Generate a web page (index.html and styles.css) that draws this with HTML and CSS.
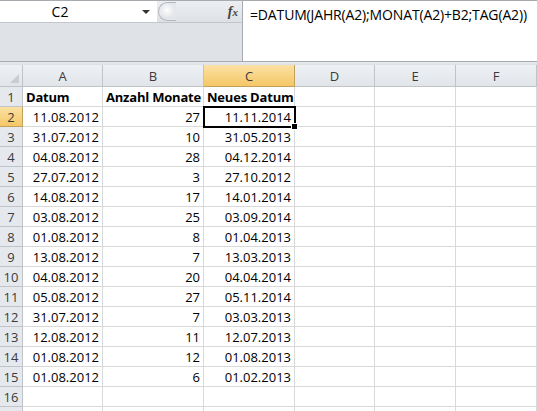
FILE: index.html
```html
<!DOCTYPE html>
<html lang="de">
  <head>
    <meta charset="utf-8" />
    <title>Neues Datum</title>
    <link rel="stylesheet" href="styles.css">
  </head>
  <body>
    <div class="formula-bar">
      <div class="formula-bar-left">
        <div class="formula-bar-top">
          <div class="name-box">
            <span class="name-box-value">C2</span>
            <span class="name-box-arrow"></span>
          </div>
          <div class="fx-pill">
            <span class="fx-grip"></span>
            <span class="fx-label">f<small>x</small></span>
          </div>
        </div>
      </div>
      <div class="formula-input">=DATUM(JAHR(A2);MONAT(A2)+B2;TAG(A2))</div>
    </div>
    <div class="formula-gap"></div>

    <div id="sheet" class="sheet">
      <div class="hdr corner"><span class="corner-tri"></span></div>
      <div class="hdr col">A</div>
      <div class="hdr col">B</div>
      <div class="hdr col active">C</div>
      <div class="hdr col">D</div>
      <div class="hdr col">E</div>
      <div class="hdr col">F</div>
    </div>

    <script src="sheet.js"></script>
  </body>
</html>
```

FILE: sheet.js
```js
var rows = [
    ["11.08.2012", "27", "11.11.2014"],
    ["31.07.2012", "10", "31.05.2013"],
    ["04.08.2012", "28", "04.12.2014"],
    ["27.07.2012", "3", "27.10.2012"],
    ["14.08.2012", "17", "14.01.2014"],
    ["03.08.2012", "25", "03.09.2014"],
    ["01.08.2012", "8", "01.04.2013"],
    ["13.08.2012", "7", "13.03.2013"],
    ["04.08.2012", "20", "04.04.2014"],
    ["05.08.2012", "27", "05.11.2014"],
    ["31.07.2012", "7", "03.03.2013"],
    ["12.08.2012", "11", "12.07.2013"],
    ["01.08.2012", "12", "01.08.2013"],
    ["01.08.2012", "6", "01.02.2013"]
];

var sheet = document.getElementById("sheet");

function cell(text, cls) {
    var el = document.createElement("div");
    el.className = cls;
    el.textContent = text;
    sheet.appendChild(el);
    return el;
}

function emptyRow(label) {
    cell(label, "hdr row");
    for (var i = 0; i < 6; i++) cell("", "cell");
}

// header row 1
cell("1", "hdr row");
cell("Datum", "cell bold");
cell("Anzahl Monate", "cell bold");
cell("Neues Datum", "cell bold");
cell("", "cell");
cell("", "cell");
cell("", "cell");

rows.forEach(function (r, i) {
    var n = i + 2;
    cell(String(n), n === 2 ? "hdr row active" : "hdr row");
    cell(r[0], "cell num");
    cell(r[1], "cell num");
    var c = cell(r[2], n === 2 ? "cell num selected" : "cell num");
    if (n === 2) {
        var handle = document.createElement("span");
        handle.className = "fill-handle";
        c.appendChild(handle);
    }
    cell("", "cell");
    cell("", "cell");
    cell("", "cell");
});

emptyRow("16");
// row 17 is only a sliver at the bottom edge
emptyRow("");
```

FILE: styles.css
```css
:root {
    --chrome-bg: #dfe3e8;
    --chrome-line: #a7abb0;
    --grid-line: #d9d9d9;
    --hdr-bg: #e5e9ee;
    --hdr-line: #c0c4c8;
    --hdr-text: #3b3b3b;
    --active-top: #fbe1a4;
    --active-bottom: #f5c766;
}

html, body {
    margin: 0;
    padding: 0;
    width: 537px;
    height: 411px;
    overflow: hidden;
    background: #fff;
    font-family: "Open Sans", "Liberation Sans", Arial, sans-serif;
    color: #000;
}

/* formula bar */
.formula-bar {
    display: flex;
    height: 62px;
    border-top: 1px solid var(--chrome-line);
    border-bottom: 1px solid var(--chrome-line);
    box-sizing: border-box;
    background: var(--chrome-bg);
}
.formula-bar-left {
    width: 242px;
    border-right: 1px solid var(--chrome-line);
}
.formula-bar-top {
    display: flex;
    height: 21px;
    border-bottom: 1px solid #c3c7cc;
}
.name-box {
    width: 157px;
    background: #fff;
    display: flex;
    align-items: center;
}
.name-box-value {
    flex: 1;
    text-align: center;
    font-size: 14px;
    padding-right: 22px;
}
.name-box-arrow {
    width: 0;
    height: 0;
    border-left: 4px solid transparent;
    border-right: 4px solid transparent;
    border-top: 4px solid #333;
    margin-right: 7px;
}
.fx-pill {
    flex: 1;
    display: flex;
    align-items: center;
    justify-content: space-between;
    background: linear-gradient(#eceef1, #dde1e6);
}
.fx-grip {
    width: 18px;
    height: 19px;
    margin-left: 1px;
    border: 1px solid #b5b9be;
    border-right: none;
    border-radius: 11px 0 0 11px;
    background: radial-gradient(circle at 8px 7px, #ffffff 0, #f3f4f6 3px, #e3e6ea 8px);
    box-sizing: border-box;
}
.fx-label {
    font-family: "Liberation Serif", "DejaVu Serif", serif;
    font-style: italic;
    font-weight: bold;
    font-size: 14px;
    color: #444;
    margin-right: 4px;
}
.fx-label small {
    font-size: 11px;
}
.formula-input {
    flex: 1;
    background: #fff;
    font-size: 14px;
    padding: 4px 0 0 7px;
    letter-spacing: -0.15px;
}
.formula-gap {
    height: 3px;
    background: linear-gradient(#e9ecef, #dcdfe3);
}

/* sheet grid */
.sheet {
    display: grid;
    grid-template-columns: 23px 80px 101px 91px 80px 81px 81px;
    grid-template-rows: 22px;
    grid-auto-rows: 20px;
    font-size: 13px;
}
.hdr, .cell {
    border-right: 1px solid var(--grid-line);
    border-bottom: 1px solid var(--grid-line);
    box-sizing: border-box;
    white-space: nowrap;
}
.hdr {
    background: var(--hdr-bg);
    color: var(--hdr-text);
    border-color: var(--hdr-line);
    display: flex;
    align-items: center;
    justify-content: center;
}
.hdr.col {
    background: linear-gradient(#eef1f4, #e1e5ea);
}
.hdr.row {
    padding-top: 1px;
}
.hdr.active {
    background: linear-gradient(var(--active-top), var(--active-bottom));
    border-color: #c2a15a;
}
.hdr.corner {
    position: relative;
    background: linear-gradient(#eef1f4, #e1e5ea);
}
.corner-tri {
    position: absolute;
    right: 3px;
    bottom: 3px;
    width: 0;
    height: 0;
    border-left: 9px solid transparent;
    border-bottom: 9px solid #c9ccd0;
}
.cell {
    padding: 1px 3px 0;
    line-height: 18px;
}
.cell.num {
    text-align: right;
}
.cell.bold {
    font-weight: bold;
    letter-spacing: -0.2px;
}
.cell.selected {
    position: relative;
    outline: 2px solid #000;
    outline-offset: -1px;
}
.fill-handle {
    position: absolute;
    right: -4px;
    bottom: -4px;
    width: 5px;
    height: 5px;
    background: #000;
    border: 1px solid #fff;
}
```
